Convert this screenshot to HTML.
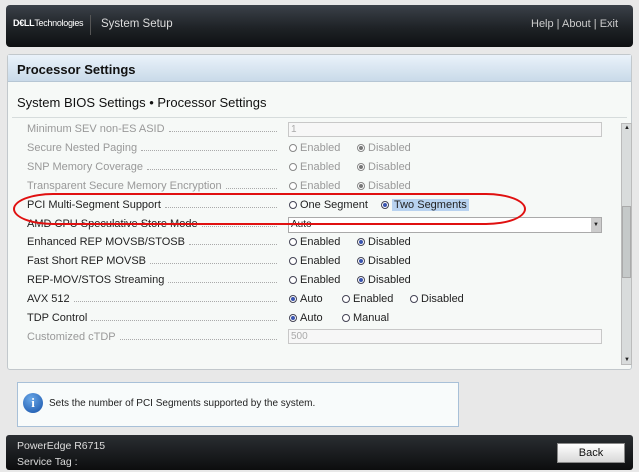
<!DOCTYPE html><html><head><meta charset="utf-8"><style>
*{margin:0;padding:0;box-sizing:border-box}
body{width:639px;height:472px;background:#e8e8e8;font-family:"Liberation Sans",sans-serif;position:relative;overflow:hidden}
.a{position:absolute}
.hdr{left:6px;top:5px;width:627px;height:42px;border-radius:4px;background:linear-gradient(#3b4149,#1e2226 55%,#0e1012);}
.panel{left:7px;top:54px;width:625px;height:316px;background:#f6f9f7;border:1px solid #c2c8cc;border-radius:3px}
.tbar{left:8px;top:55px;width:623px;height:27px;background:linear-gradient(#eaf2fa,#c9dae9);border-bottom:1px solid #b6c6d4}
.row{position:absolute;left:27px;width:250px;height:16px;font-size:11px;color:#222;display:flex;align-items:center;white-space:nowrap}
.row .d{flex:1;border-bottom:1px dotted #aaa;margin-left:4px;height:1px;margin-top:4px}
.g{color:#999}
.row.g{color:#999}
.rb{position:absolute;font-size:11px;color:#222;display:flex;align-items:center;white-space:nowrap;height:16px}
.rb.g{color:#999}
.rb i{display:inline-block;width:8px;height:8px;border:1px solid #445;border-radius:50%;margin-right:3px;position:relative;background:#fff}
.rb i.on::after{content:"";position:absolute;left:1px;top:1px;width:4px;height:4px;border-radius:50%;background:#3a55b0}
.rb.g i{border-color:#888}.rb.g i.on::after{background:#777}
.inp{position:absolute;left:288px;width:314px;height:15px;border:1px solid #c8c8c8;background:#f7f7f7;font-size:10px;color:#aaa;padding-left:2px;line-height:13px}
</style></head><body>
<div class="a hdr"></div>
<div class="a" style="left:13px;top:18px;font-size:9px;color:#fff;letter-spacing:-0.3px"><b>D€LL</b>Technologies</div>
<div class="a" style="left:90px;top:15px;width:1px;height:20px;background:#555"></div>
<div class="a" style="left:101px;top:18px;font-size:11.5px;color:#ddd">System Setup</div>
<div class="a" style="left:531px;top:18px;font-size:11px;color:#ccc">Help | About | Exit</div>
<div class="a panel"></div>
<div class="a tbar"></div>
<div class="a" style="left:17px;top:62px;font-size:13px;font-weight:bold;color:#111">Processor Settings</div>
<div class="a" style="left:17px;top:95px;font-size:13px;color:#111">System BIOS Settings • Processor Settings</div>
<div class="a" style="left:12px;top:117px;width:615px;height:1px;background:#d6dcdc"></div>
<div class="a" style="left:621px;top:123px;width:11px;height:242px;background:#d9dcdc;border:1px solid #bbb"></div>
<div class="a" style="left:622px;top:206px;width:9px;height:72px;background:#c5c9c9;border:1px solid #aaa"></div>
<div class="a" style="left:624px;top:125px;font-size:6px;color:#222">▲</div>
<div class="a" style="left:624px;top:357px;font-size:6px;color:#222">▼</div>

<div class="row g" style="top:121px">Minimum SEV non-ES ASID<span class="d"></span></div>
<div class="inp" style="top:122px">1</div>
<div class="row g" style="top:140px">Secure Nested Paging<span class="d"></span></div>
<div class="rb g" style="left:289px;top:140px"><i></i>Enabled</div><div class="rb g" style="left:357px;top:140px"><i class="on"></i>Disabled</div>
<div class="row g" style="top:159px">SNP Memory Coverage<span class="d"></span></div>
<div class="rb g" style="left:289px;top:159px"><i></i>Enabled</div><div class="rb g" style="left:357px;top:159px"><i class="on"></i>Disabled</div>
<div class="row g" style="top:178px">Transparent Secure Memory Encryption<span class="d"></span></div>
<div class="rb g" style="left:289px;top:178px"><i></i>Enabled</div><div class="rb g" style="left:357px;top:178px"><i class="on"></i>Disabled</div>
<div class="row" style="top:197px">PCI Multi-Segment Support<span class="d"></span></div>
<div class="rb" style="left:289px;top:197px"><i></i>One Segment</div><div class="rb" style="left:381px;top:197px"><i class="on"></i><span style="background:#b8d2f0;padding:0 2px">Two Segments</span></div>
<div class="row" style="top:216px">AMD CPU Speculative Store Mode<span class="d"></span></div>
<div class="inp" style="top:217px;height:16px;background:#fff;border-color:#aaa;color:#222">Auto<div class="a" style="right:0;top:0;width:10px;height:14px;background:#ccc;font-size:6px;text-align:center;line-height:14px">▼</div></div>
<div class="row" style="top:234px">Enhanced REP MOVSB/STOSB<span class="d"></span></div>
<div class="rb" style="left:289px;top:234px"><i></i>Enabled</div><div class="rb" style="left:357px;top:234px"><i class="on"></i>Disabled</div>
<div class="row" style="top:253px">Fast Short REP MOVSB<span class="d"></span></div>
<div class="rb" style="left:289px;top:253px"><i></i>Enabled</div><div class="rb" style="left:357px;top:253px"><i class="on"></i>Disabled</div>
<div class="row" style="top:272px">REP-MOV/STOS Streaming<span class="d"></span></div>
<div class="rb" style="left:289px;top:272px"><i></i>Enabled</div><div class="rb" style="left:357px;top:272px"><i class="on"></i>Disabled</div>
<div class="row" style="top:291px">AVX 512<span class="d"></span></div>
<div class="rb" style="left:289px;top:291px"><i class="on"></i>Auto</div><div class="rb" style="left:342px;top:291px"><i></i>Enabled</div><div class="rb" style="left:410px;top:291px"><i></i>Disabled</div>
<div class="row" style="top:310px">TDP Control<span class="d"></span></div>
<div class="rb" style="left:289px;top:310px"><i class="on"></i>Auto</div><div class="rb" style="left:342px;top:310px"><i></i>Manual</div>
<div class="row g" style="top:329px">Customized cTDP<span class="d"></span></div>
<div class="inp" style="top:329px">500</div>

<div class="a" style="left:13px;top:193px;width:513px;height:32px;border:2.5px solid #e01010;border-radius:40px / 16px"></div>

<div class="a" style="left:17px;top:382px;width:442px;height:45px;background:#f8fbfb;border:1px solid #a8c0d8"></div>
<div class="a" style="left:23px;top:393px;width:20px;height:20px;border-radius:50%;background:radial-gradient(circle at 40% 30%,#6aa8e8,#1450a8);color:#fff;font-weight:bold;font-size:13px;text-align:center;line-height:20px;font-family:'Liberation Serif',serif">i</div>
<div class="a" style="left:49px;top:398px;font-size:10px;color:#222">Sets the number of PCI Segments supported by the system.</div>

<div class="a" style="left:6px;top:435px;width:627px;height:35px;border-radius:3px;background:linear-gradient(#2a2e32,#0c0d0e)"></div>
<div class="a" style="left:17px;top:440px;font-size:10.5px;color:#ddd">PowerEdge R6715</div>
<div class="a" style="left:17px;top:456px;font-size:10.5px;color:#ddd">Service Tag :</div>
<div class="a" style="left:557px;top:443px;width:68px;height:20px;border:1px solid #888;background:linear-gradient(#fff,#d8d8d8);font-size:11px;text-align:center;line-height:18px;color:#111">Back</div>
</body></html>
